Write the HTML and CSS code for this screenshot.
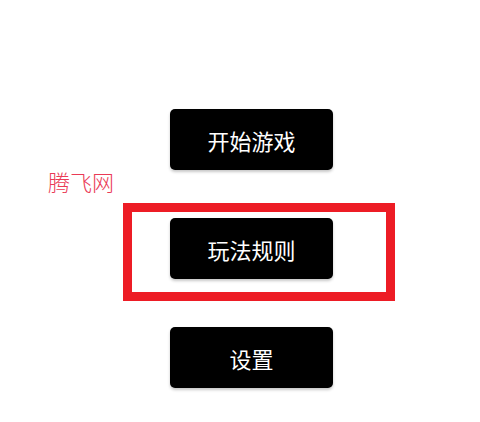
FILE: index.html
```html
<!DOCTYPE html>
<html lang="zh-CN">
<head>
<meta charset="utf-8">
<title>菜单</title>
<link rel="stylesheet" href="styles.css">
</head>
<body>
<div class="page">
  <div class="btn btn-first">开始游戏</div>
  <div class="label">腾飞网</div>
  <div class="highlight">
    <div class="btn">玩法规则</div>
  </div>
  <div class="btn btn-last">设置</div>
</div>
</body>
</html>
```

FILE: styles.css
```css
html, body {
  margin: 0;
  padding: 0;
  background: #ffffff;
}
.page {
  width: 480px;
  height: 422px;
  padding-top: 109px;
  box-sizing: border-box;
  display: flex;
  flex-direction: column;
  align-items: flex-start;
  font-family: "Noto Sans CJK SC", "Noto Sans", sans-serif;
}
.btn {
  width: 163px;
  height: 61px;
  background: #000000;
  color: #ffffff;
  border-radius: 5px;
  box-shadow: 0 2px 3px rgba(0, 0, 0, 0.22);
  display: flex;
  align-items: center;
  justify-content: center;
  font-size: 22px;
  letter-spacing: 0;
  box-sizing: border-box;
  padding-top: 1px;
}
.btn-first {
  margin-left: 170px;
}
.label {
  margin-left: 48px;
  height: 33px;
  line-height: 23px;
  font-size: 22px;
  font-weight: 300;
  color: #ea3a56;
}
.highlight {
  margin-left: 123px;
  width: 272px;
  height: 98px;
  box-sizing: border-box;
  border: 9px solid #ed1c25;
  padding-top: 6px;
  padding-left: 38px;
}
.btn-last {
  margin-left: 170px;
  margin-top: 26px;
}
```
